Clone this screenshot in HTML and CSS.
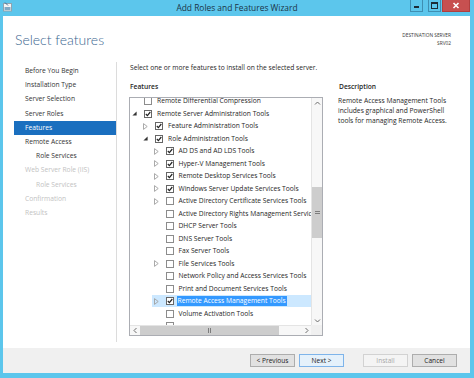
FILE: index.html
```html
<!DOCTYPE html>
<html lang="en">
<head>
    <meta charset="UTF-8">
    <title>Add Roles and Features Wizard</title>
    <link rel="stylesheet" href="styles.css">
</head>
<body>
<div class="frame">
    <div class="titlebar">
        <svg class="app-icon" width="10" height="10" viewBox="0 0 10 10">
            <rect x="0.5" y="1.5" width="8" height="7.5" fill="#f4f4f4" stroke="#8fa3b0"/>
            <rect x="1.5" y="5" width="6" height="3" fill="#7fa9c4"/>
            <path d="M2 0.5 L5 3.5" stroke="#3d6f95" stroke-width="1"/>
        </svg>
        <div class="title">Add Roles and Features Wizard</div>
        <div class="controls">
            <div class="ctl min"><span></span></div>
            <div class="ctl max"><span></span></div>
            <div class="ctl close">
                <svg width="8" height="7" viewBox="0 0 8 7"><path d="M1.5 1 L6.5 6 M6.5 1 L1.5 6" stroke="#fff" stroke-width="1.6"/></svg>
            </div>
        </div>
    </div>

    <div class="client">
        <div class="page-head">
            <h1>Select features</h1>
            <div class="dest">DESTINATION SERVER<br>SRV02</div>
        </div>

        <div class="main">
            <ul class="steps">
                <li>Before You Begin</li>
                <li>Installation Type</li>
                <li>Server Selection</li>
                <li>Server Roles</li>
                <li class="active">Features</li>
                <li>Remote Access</li>
                <li class="sub">Role Services</li>
                <li class="off">Web Server Role (IIS)</li>
                <li class="sub off">Role Services</li>
                <li class="off">Confirmation</li>
                <li class="off">Results</li>
            </ul>

            <div class="content">
                <p class="intro">Select one or more features to install on the selected server.</p>
                <div class="columns">
                    <div class="features">
                        <div class="label">Features</div>
                        <div class="tree-box">
                            <div class="tree">
                                <div class="rows">
                                    <div class="row l0"><span class="exp"></span><span class="cb"></span><span class="txt">Remote Differential Compression</span></div>
                                    <div class="row l0"><span class="exp open"></span><span class="cb on"></span><span class="txt">Remote Server Administration Tools</span></div>
                                    <div class="row l1"><span class="exp shut"></span><span class="cb on"></span><span class="txt">Feature Administration Tools</span></div>
                                    <div class="row l1"><span class="exp open"></span><span class="cb on"></span><span class="txt">Role Administration Tools</span></div>
                                    <div class="row l2"><span class="exp shut"></span><span class="cb on"></span><span class="txt">AD DS and AD LDS Tools</span></div>
                                    <div class="row l2"><span class="exp shut"></span><span class="cb on"></span><span class="txt">Hyper-V Management Tools</span></div>
                                    <div class="row l2"><span class="exp shut"></span><span class="cb on"></span><span class="txt">Remote Desktop Services Tools</span></div>
                                    <div class="row l2"><span class="exp shut"></span><span class="cb on"></span><span class="txt">Windows Server Update Services Tools</span></div>
                                    <div class="row l2"><span class="exp shut"></span><span class="cb"></span><span class="txt">Active Directory Certificate Services Tools</span></div>
                                    <div class="row l2"><span class="exp"></span><span class="cb"></span><span class="txt">Active Directory Rights Management Services Tools</span></div>
                                    <div class="row l2"><span class="exp"></span><span class="cb"></span><span class="txt">DHCP Server Tools</span></div>
                                    <div class="row l2"><span class="exp"></span><span class="cb"></span><span class="txt">DNS Server Tools</span></div>
                                    <div class="row l2"><span class="exp"></span><span class="cb"></span><span class="txt">Fax Server Tools</span></div>
                                    <div class="row l2"><span class="exp shut"></span><span class="cb"></span><span class="txt">File Services Tools</span></div>
                                    <div class="row l2"><span class="exp"></span><span class="cb"></span><span class="txt">Network Policy and Access Services Tools</span></div>
                                    <div class="row l2"><span class="exp"></span><span class="cb"></span><span class="txt">Print and Document Services Tools</span></div>
                                    <div class="row l2 sel"><span class="exp shut"></span><span class="cb on"></span><span class="txt">Remote Access Management Tools</span></div>
                                    <div class="row l2"><span class="exp"></span><span class="cb"></span><span class="txt">Volume Activation Tools</span></div>
                                    <div class="row l2"><span class="exp"></span><span class="cb"></span></div>
                                </div>
                            </div>
                            <div class="vscroll">
                                <div class="arrow"><svg width="7" height="5" viewBox="0 0 7 5"><path d="M1 3.5 L3.5 1 L6 3.5" fill="none" stroke="#6d6d6d"/></svg></div>
                                <div class="vthumb"><span class="grip"></span></div>
                                <div class="arrow down"><svg width="7" height="5" viewBox="0 0 7 5"><path d="M1 1.5 L3.5 4 L6 1.5" fill="none" stroke="#6d6d6d"/></svg></div>
                            </div>
                            <div class="hscroll">
                                <div class="arrow"><svg width="5" height="7" viewBox="0 0 5 7"><path d="M3.5 1 L1 3.5 L3.5 6" fill="none" stroke="#6d6d6d"/></svg></div>
                                <div class="hthumb"><span class="grip"></span></div>
                                <div class="arrow right"><svg width="5" height="7" viewBox="0 0 5 7"><path d="M1.5 1 L4 3.5 L1.5 6" fill="none" stroke="#6d6d6d"/></svg></div>
                            </div>
                            <div class="corner"></div>
                        </div>
                    </div>
                    <div class="desc">
                        <div class="label">Description</div>
                        <p>Remote Access Management Tools includes graphical and PowerShell tools for managing Remote Access.</p>
                    </div>
                </div>
            </div>
        </div>

        <div class="footer">
            <button class="btn">&lt; Previous</button>
            <button class="btn default">Next &gt;</button>
            <button class="btn install" disabled>Install</button>
            <button class="btn">Cancel</button>
        </div>
    </div>
</div>
</body>
</html>
```

FILE: styles.css
```css
body {
    margin: 0;
    background: #5cc6ec;
    font-family: 'Open Sans', 'Noto Sans', sans-serif;
    font-size: 6.7px;
    color: #262626;
}
.frame {
    width: 474px;
    height: 378px;
    display: flex;
    flex-direction: column;
}

/* Заголовок окна */
.titlebar {
    height: 16px;
    flex: none;
    display: grid;
    grid-template-columns: 1fr auto 1fr;
    align-items: start;
}
.app-icon {
    margin: 2px 0 0 3px;
}
.title {
    font-size: 8.4px;
    line-height: 15px;
    color: #1b3446;
}
.controls {
    justify-self: end;
    display: flex;
    margin-right: 4px;
}
.ctl {
    width: 13px;
    height: 12px;
    box-sizing: border-box;
    border: 1px solid #3f8fb2;
    border-top: none;
    display: flex;
    align-items: center;
    justify-content: center;
}
.ctl.min span {
    width: 5px;
    height: 2px;
    margin-top: 3px;
    background: #1c2b36;
}
.ctl.max {
    margin-left: 5px;
}
.ctl.max span {
    width: 5px;
    height: 4px;
    border: 1.5px solid #1c2b36;
    border-top-width: 2px;
}
.ctl.close {
    width: 28px;
    margin-left: 1px;
    background: #c75050;
    border-color: #b03f3f;
}

/* Клиентская область */
.client {
    flex: 1;
    margin: 0 4px 5px 3px;
    background: #fff;
    display: flex;
    flex-direction: column;
}
.page-head {
    height: 44px;
    flex: none;
    display: flex;
    justify-content: space-between;
    padding: 0 19px 0 12px;
}
h1 {
    margin: 15px 0 0;
    font: 300 14px/18px 'Lato', 'Open Sans', sans-serif;
    color: #3a6690;
}
.dest {
    margin-top: 16px;
    text-align: right;
    font-size: 4.8px;
    line-height: 7.5px;
    color: #333;
}
.main {
    height: 288px;
    flex: none;
    display: flex;
}

/* Шаги мастера */
.steps {
    width: 113px;
    margin: 2px 0 6px;
    padding: 2px 0 0;
    list-style: none;
    border-right: 1px solid #dcdcdc;
    font-size: 6.7px;
}
.steps li {
    height: 14.2px;
    line-height: 14.2px;
    margin-left: 11px;
    padding-left: 11px;
    color: #333;
}
.steps li.sub {
    padding-left: 22px;
}
.steps li.off {
    color: #c2c2c2;
}
.steps li.active {
    background: #1a6fbf;
    color: #fff;
}

/* Содержимое */
.content {
    flex: 1;
    padding: 3px 0 0 12px;
}
.intro {
    margin: 0;
    padding-left: 1px;
    line-height: 10px;
}
.columns {
    display: flex;
    margin-top: 9px;
}
.features {
    width: 194px;
}
.label {
    padding-left: 1px;
    line-height: 10px;
    font-weight: 600;
    margin-bottom: 5px;
}
.desc {
    margin-left: 15px;
    width: 118px;
}
.desc .label {
    margin-bottom: 4px;
}
.desc p {
    margin: 0;
    line-height: 10px;
}

/* Дерево компонентов */
.tree-box {
    height: 239px;
    box-sizing: border-box;
    border: 1px solid #abadb3;
    display: grid;
    grid-template-columns: 1fr 11px;
    grid-template-rows: 1fr 10px;
}
.tree {
    overflow: hidden;
}
.rows {
    margin-top: -3.25px;
}
.row {
    height: 12.5px;
    display: flex;
    align-items: center;
}
.row.l1 {
    margin-left: 11px;
}
.row.l2 {
    margin-left: 21.5px;
}
.exp {
    width: 13px;
    height: 8px;
    flex: none;
    background-position: 2px center;
    background-repeat: no-repeat;
}
.exp.shut {
    background-image: url("data:image/svg+xml;utf8,<svg xmlns='http://www.w3.org/2000/svg' width='5' height='7' viewBox='0 0 5 7'><path d='M0.5 0.6 L4.2 3.5 L0.5 6.4 Z' fill='none' stroke='%23a0a0a0' stroke-width='0.9'/></svg>");
}
.exp.open {
    background-image: url("data:image/svg+xml;utf8,<svg xmlns='http://www.w3.org/2000/svg' width='5' height='5' viewBox='0 0 5 5'><path d='M4.6 0.4 L4.6 4.6 L0.4 4.6 Z' fill='%23333'/></svg>");
}
.cb {
    width: 8px;
    height: 8px;
    flex: none;
    box-sizing: border-box;
    margin-left: 1px;
    border: 1px solid #8c8c8c;
    background: #fff;
}
.cb.on {
    border-color: #666;
    background: #fff url("data:image/svg+xml;utf8,<svg xmlns='http://www.w3.org/2000/svg' width='6' height='6' viewBox='0 0 6 6'><path d='M0.8 3 L2.4 4.6 L5.3 1' fill='none' stroke='%23222' stroke-width='1.2'/></svg>") center no-repeat;
}
.txt {
    margin-left: 4px;
    padding: 0 1px;
    white-space: nowrap;
    line-height: 10px;
}
.row.sel {
    background: #cce8ff;
}
.row.sel .txt {
    background: #3399ff;
    color: #fff;
    margin-left: 3px;
}

/* Полосы прокрутки */
.vscroll {
    background: #f7f7f7;
    border-left: 1px solid #e4e4e4;
    display: flex;
    flex-direction: column;
}
.arrow {
    height: 10px;
    flex: none;
    display: flex;
    align-items: center;
    justify-content: center;
}
.arrow.down {
    margin-top: auto;
}
.vthumb {
    margin-top: 79px;
    height: 51px;
    background: #cdcdcd;
    display: flex;
    align-items: center;
    justify-content: center;
}
.vthumb .grip {
    width: 5px;
    height: 4px;
    background: repeating-linear-gradient(#7c7c7c 0 1px, transparent 1px 2px);
}
.hscroll {
    background: #f7f7f7;
    border-top: 1px solid #e4e4e4;
    display: flex;
}
.hscroll .arrow {
    width: 10px;
    height: auto;
}
.hscroll .arrow.right {
    margin-left: auto;
}
.hthumb {
    width: 139px;
    background: #cdcdcd;
    display: flex;
    align-items: center;
    justify-content: center;
}
.hthumb .grip {
    width: 4px;
    height: 5px;
    background: repeating-linear-gradient(90deg, #7c7c7c 0 1px, transparent 1px 2px);
}
.corner {
    background: #f0f0f0;
}

/* Нижняя панель */
.footer {
    flex: 1;
    background: #f0f0f0;
    display: flex;
    justify-content: flex-end;
    align-items: flex-start;
    padding: 6px 13px 0 0;
}
.btn {
    width: 45px;
    height: 13px;
    padding: 0;
    margin-left: 4px;
    border: 1px solid #adadad;
    background: #e1e1e1;
    font: 6.6px 'Open Sans', sans-serif;
    color: #222;
}
.btn.default {
    border-color: #7eb4ea;
    background: #e5f1fb;
}
.btn.install {
    margin-left: 19px;
    border-color: #d2d2d2;
    background: #f4f4f4;
    color: #a8a8a8;
}
```
